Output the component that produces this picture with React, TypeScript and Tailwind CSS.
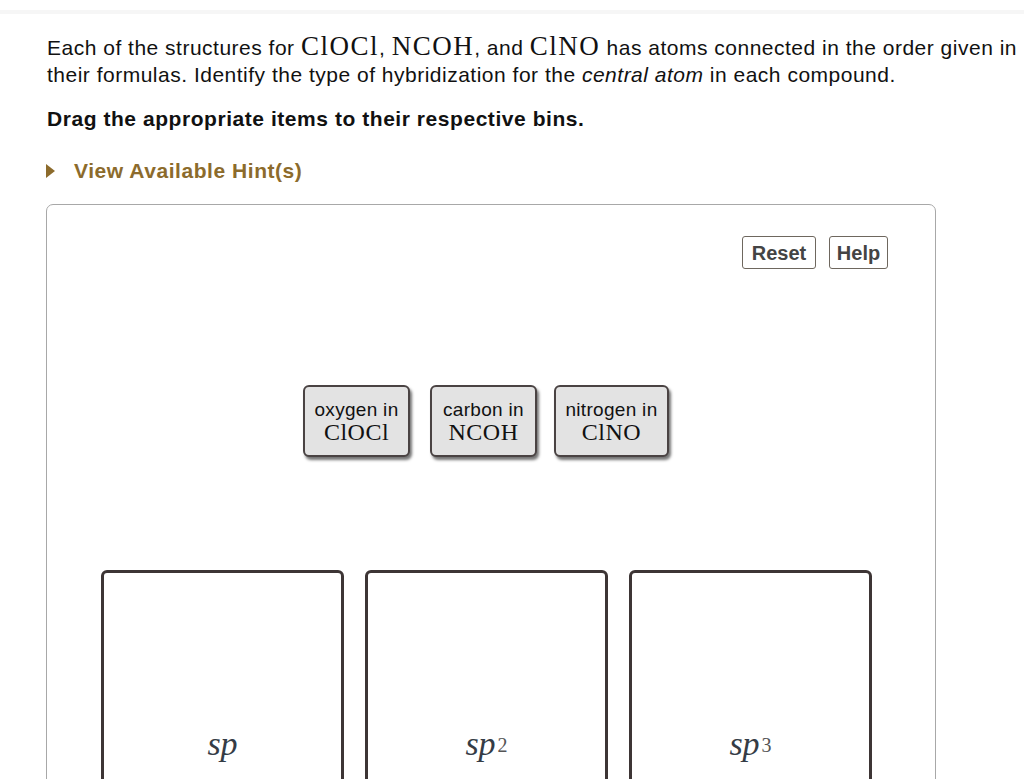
export default function App() {
  const chem = "font-['Liberation_Serif',serif] text-[27px] leading-none tracking-[1.5px]";
  return (
    <div className="min-h-[779px] w-[1024px] overflow-hidden bg-white font-['Liberation_Sans',Arial,sans-serif] text-[#111]">
      <div className="h-[10px]" />
      <div className="h-[4px] bg-[#f6f6f6]" />

      <div className="pl-[47px] pt-[19px]">
        <p className="h-[54px] text-[21px] leading-[27px] tracking-[0.5px] whitespace-nowrap">
          Each of the structures for <span className={chem}>ClOCl</span>, <span className={chem}>NCOH</span>, and{" "}
          <span className={chem}>ClNO</span> has atoms connected in the order given in
          <br />
          their formulas. Identify the type of hybridization for the <em>central atom</em> in each compound.
        </p>

        <p className="mt-[18px] text-[21px] font-bold leading-[27px] tracking-[0.55px]">
          Drag the appropriate items to their respective bins.
        </p>

        <div className="mt-[25px] flex items-center leading-[27px]">
          <span className="ml-[-1px] mr-[19px] h-0 w-0 border-y-[7px] border-l-[9px] border-y-transparent border-l-[#8c6b2c]" />
          <span className="text-[21px] font-bold tracking-[0.55px] text-[#8c6b2c]">View Available Hint(s)</span>
        </div>
      </div>

      {/* drag and drop panel */}
      <div className="ml-[46px] mt-[20px] h-[600px] w-[890px] rounded-[7px] border border-[#a8a8a8]">
        <div className="flex justify-end gap-[13px] pr-[47px] pt-[31px]">
          <button className="h-[33px] w-[74px] rounded-[3px] border border-[#6e675e] text-[20px] font-bold text-[#444]">
            Reset
          </button>
          <button className="h-[33px] w-[59px] rounded-[3px] border border-[#6e675e] text-[20px] font-bold text-[#444]">
            Help
          </button>
        </div>

        <div className="mt-[116px] flex pl-[256px]">
          <Item label="oxygen in" formula="ClOCl" className="w-[107px]" />
          <Item label="carbon in" formula="NCOH" className="ml-[20px] w-[107px]" />
          <Item label="nitrogen in" formula="ClNO" className="ml-[17px] w-[115px]" />
        </div>

        <div className="mt-[113px] flex gap-[21px] pl-[54px]">
          <Bin>sp</Bin>
          <Bin>
            sp<span className="ml-[2px] relative -top-[3px] not-italic text-[20px] text-[#555]">2</span>
          </Bin>
          <Bin>
            sp<span className="ml-[2px] relative -top-[3px] not-italic text-[20px] text-[#555]">3</span>
          </Bin>
        </div>
      </div>
    </div>
  );
}

function Item({ label, formula, className }: { label: string; formula: string; className: string }) {
  return (
    <div
      className={`${className} flex h-[72px] flex-col items-center justify-center rounded-[6px] border-2 border-[#4a4343] bg-[#e3e3e3] shadow-[2px_3px_3px_rgba(0,0,0,0.55)]`}
    >
      <span className="text-[19px] leading-[23px] tracking-[0.3px] text-[#111]">{label}</span>
      <span className="font-['Liberation_Serif',serif] text-[24px] leading-[23px] tracking-[0.5px] text-[#111]">
        {formula}
      </span>
    </div>
  );
}

function Bin({ children }: { children: React.ReactNode }) {
  return (
    <div className="flex h-[220px] w-[243px] flex-col items-center justify-end rounded-[6px] border-[3px] border-[#3d3535] pb-[26px]">
      <span className="font-['Liberation_Serif',serif] text-[34px] italic leading-none text-[#353c46]">{children}</span>
    </div>
  );
}
